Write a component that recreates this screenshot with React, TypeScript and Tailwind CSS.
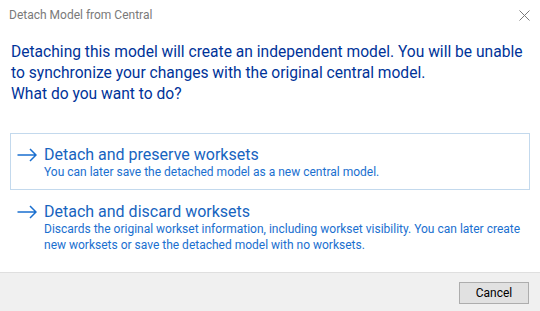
const Arrow = () => (
  <svg width="20" height="14" viewBox="0 0 20 14" className="shrink-0">
    <path d="M0.5 7 H19 M13 1 L19 7 L13 13" fill="none" stroke="#1a6fcf" strokeWidth="1.5" />
  </svg>
);

const options = [
  {
    title: 'Detach and preserve worksets',
    text: 'You can later save the detached model as a new central model.',
    active: true,
  },
  {
    title: 'Detach and discard worksets',
    text: 'Discards the original workset information, including workset visibility. You can later create new worksets or save the detached model with no worksets.',
    active: false,
  },
];

export default function App() {
  return (
    <div className="w-[540px] h-[311px] bg-white flex flex-col font-['Roboto',sans-serif] overflow-hidden">
      {/* title bar */}
      <div className="h-[30px] shrink-0 pl-[9px] pr-[10px] flex items-center justify-between">
        <span className="text-[12px] text-[#7a7a7a]">Detach Model from Central</span>
        <svg width="11" height="11" viewBox="0 0 11 11">
          <path d="M0.5 0.5 L10.5 10.5 M10.5 0.5 L0.5 10.5" stroke="#7a7a7a" strokeWidth="1" />
        </svg>
      </div>

      <div className="flex-1 flex flex-col">
        <p className="mt-[12px] pl-[11px] text-[15.6px] leading-[21px] text-[#003399] whitespace-nowrap">
          Detaching this model will create an independent model. You will be unable
          <br />
          to synchronize your changes with the original central model.
          <br />
          What do you want to do?
        </p>

        <div className="mt-[28px] mx-[10px] flex flex-col">
          {options.map((o) => (
            <div
              key={o.title}
              className={`border pl-[6px] pr-[8px] pt-[11px] pb-[9px] ${o.active ? 'border-[#c3d9ed]' : 'border-transparent'}`}
            >
              <div className="flex items-center gap-[7px]">
                <Arrow />
                <span className="text-[16px] leading-[19px] text-[#1764c0]">{o.title}</span>
              </div>
              <p className="pl-[27px] text-[12px] leading-[16px] text-[#1a6fcf]">{o.text}</p>
            </div>
          ))}
        </div>
      </div>

      {/* footer */}
      <div className="h-[39px] shrink-0 bg-[#f0f0f0] border-t border-[#dfdfdf] flex items-start justify-end pt-[9px] pr-[11px]">
        <button className="w-[70px] h-[22px] bg-[#e1e1e1] border border-[#adadad] text-[12px] text-black leading-none">
          Cancel
        </button>
      </div>
    </div>
  );
}
